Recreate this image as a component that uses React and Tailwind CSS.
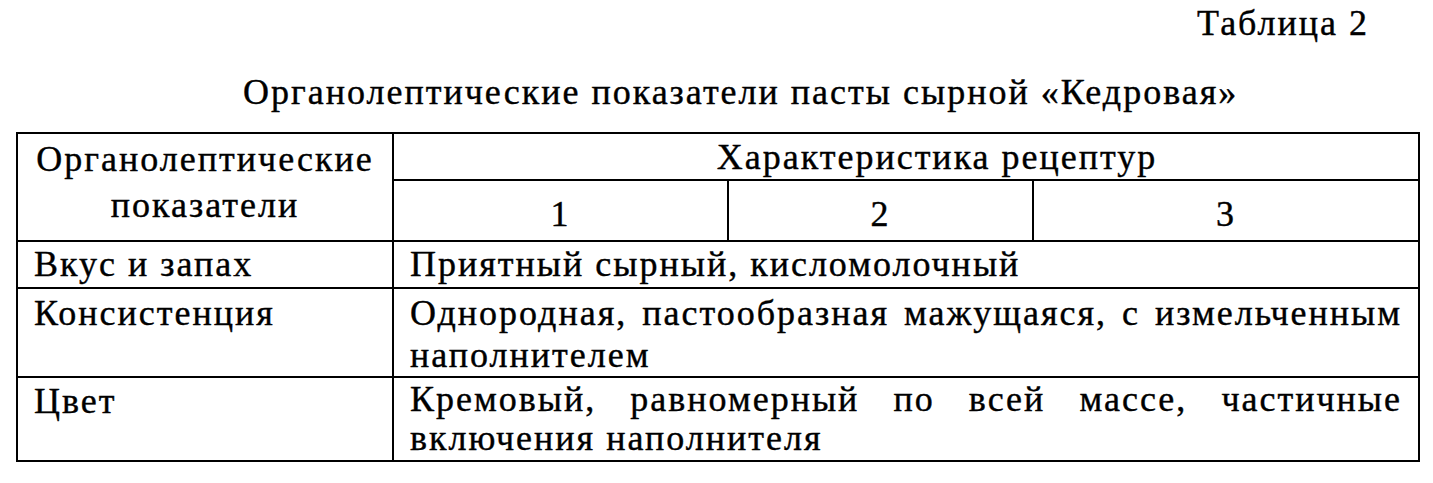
export default function App() {
  const cell = 'border-2 border-black px-4 align-top';
  return (
    <div className="w-[1433px] h-[483px] bg-white text-black overflow-hidden tracking-[2px] [-webkit-text-stroke:0.4px_black]" style={{ fontFamily: '"Liberation Serif", "Times New Roman", serif' }}>
      <div className="flex justify-end pr-[64px] pt-[2px] h-[62px] text-[36px] leading-[42px]">Таблица 2</div>
      <div className="pl-[243px] h-[70px] text-[36px] leading-[42px] pt-[9px]">Органолептические показатели пасты сырной «Кедровая»</div>
      <table className="ml-[16px] w-[1402px] table-fixed border-collapse text-[36px] leading-[42px]">
        <colgroup>
          <col className="w-[376px]" />
          <col className="w-[335px]" />
          <col className="w-[305px]" />
          <col className="w-[386px]" />
        </colgroup>
        <tbody>
          <tr className="h-[47px]">
            <td rowSpan={2} className={`${cell} text-center align-middle leading-[46px] pt-[2px]`}>
              Органолептические<br />показатели
            </td>
            <td colSpan={3} className={`${cell} text-center pt-[2px] pl-[78px]`}>Характеристика рецептур</td>
          </tr>
          <tr className="h-[61px]">
            <td className={`${cell} text-center pt-[12px]`}>1</td>
            <td className={`${cell} text-center pt-[12px]`}>2</td>
            <td className={`${cell} text-center pt-[12px]`}>3</td>
          </tr>
          <tr className="h-[47px]">
            <td className={`${cell} pt-[1px]`}>Вкус и запах</td>
            <td colSpan={3} className={`${cell} pt-[1px]`}>Приятный сырный, кисломолочный</td>
          </tr>
          <tr className="h-[88px]">
            <td className={`${cell} pt-[3px]`}>Консистенция</td>
            <td colSpan={3} className={`${cell} pt-[3px] text-justify`}>Однородная, пастообразная мажущаяся, с измельченным наполнителем</td>
          </tr>
          <tr className="h-[84px]">
            <td className={`${cell} pt-[2px]`}>Цвет</td>
            <td colSpan={3} className={`${cell} pt-[2px] text-justify leading-[39px]`}>Кремовый, равномерный по всей массе, частичные включения наполнителя</td>
          </tr>
        </tbody>
      </table>
    </div>
  );
}
